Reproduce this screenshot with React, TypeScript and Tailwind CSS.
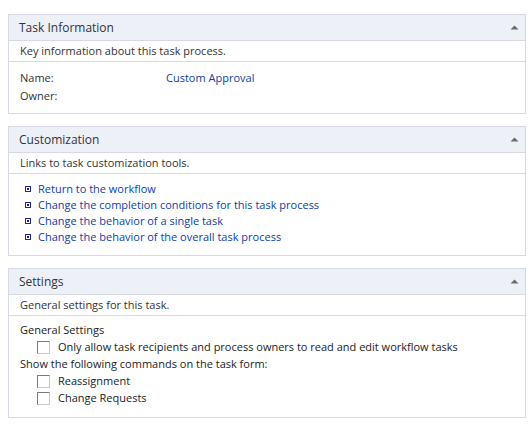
const font = { fontFamily: '"Open Sans", "Liberation Sans", Arial, sans-serif' };

const Caret = () => (
  <svg width="9" height="5" viewBox="0 0 9 5" className="block">
    <path d="M0.5 4.5 L4.5 0.5 L8.5 4.5 Z" fill="#6b6b6b" />
  </svg>
);

const Panel = ({
  title,
  description,
  children,
  bodyClass,
}: {
  title: string;
  description: string;
  children: React.ReactNode;
  bodyClass: string;
}) => {
  return (
    <section className="border border-[#d5dae3] bg-white">
      <div className="flex h-[25px] items-center justify-between bg-[#eef0f8] pl-[10px] pr-[6px]">
        <h2 className="text-[12px] text-[#333]">{title}</h2>
        <Caret />
      </div>
      <p className="flex h-[22px] items-center border-y border-[#d5dae3] pl-[11px] text-[11px] text-[#333]">
        {description}
      </p>
      <div className={bodyClass}>{children}</div>
    </section>
  );
};

const Check = ({ label }: { label: string }) => (
  <label className="flex h-[17px] items-center pl-[17px]">
    <span className="mr-[8px] h-[13px] w-[13px] border border-t-[#7a7a7a] border-l-[#7a7a7a] border-r-[#c9c9c9] border-b-[#c9c9c9] bg-white" />
    <span>{label}</span>
  </label>
);

const links = [
  "Return to the workflow",
  "Change the completion conditions for this task process",
  "Change the behavior of a single task",
  "Change the behavior of the overall task process",
];

export default function App() {
  return (
    <div className="min-h-[430px] bg-white pt-[14px] pl-[8px] pr-[3px]" style={font}>
      <div className="flex flex-col gap-[12px]">
        <Panel
          title="Task Information"
          description="Key information about this task process."
          bodyClass="pt-[7px] pb-[8px] pl-[11px] text-[11px] text-[#333]"
        >
          <div className="grid grid-cols-[146px_1fr] leading-[18px]">
            <span>Name:</span>
            <a className="text-[#0b3fa6]">Custom Approval</a>
            <span>Owner:</span>
            <span />
          </div>
        </Panel>

        <Panel
          title="Customization"
          description="Links to task customization tools."
          bodyClass="pt-[7px] pb-[10px] pl-[16px] text-[11px]"
        >
          <ul className="flex flex-col">
            {links.map((l) => (
              <li key={l} className="flex h-[16px] items-center text-[#0b3fa6]">
                <span className="mr-[7px] flex h-[6px] w-[6px] items-center justify-center border border-[#1c2a8c]">
                  <span className="h-[2px] w-[2px] bg-[#1c2a8c]" />
                </span>
                {l}
              </li>
            ))}
          </ul>
        </Panel>

        <Panel
          title="Settings"
          description="General settings for this task."
          bodyClass="pt-[6px] pb-[10px] pl-[11px] text-[11px] text-[#222]"
        >
          <div className="flex h-[17px] items-center">General Settings</div>
          <Check label="Only allow task recipients and process owners to read and edit workflow tasks" />
          <div className="flex h-[17px] items-center">Show the following commands on the task form:</div>
          <Check label="Reassignment" />
          <Check label="Change Requests" />
        </Panel>
      </div>
    </div>
  );
}
